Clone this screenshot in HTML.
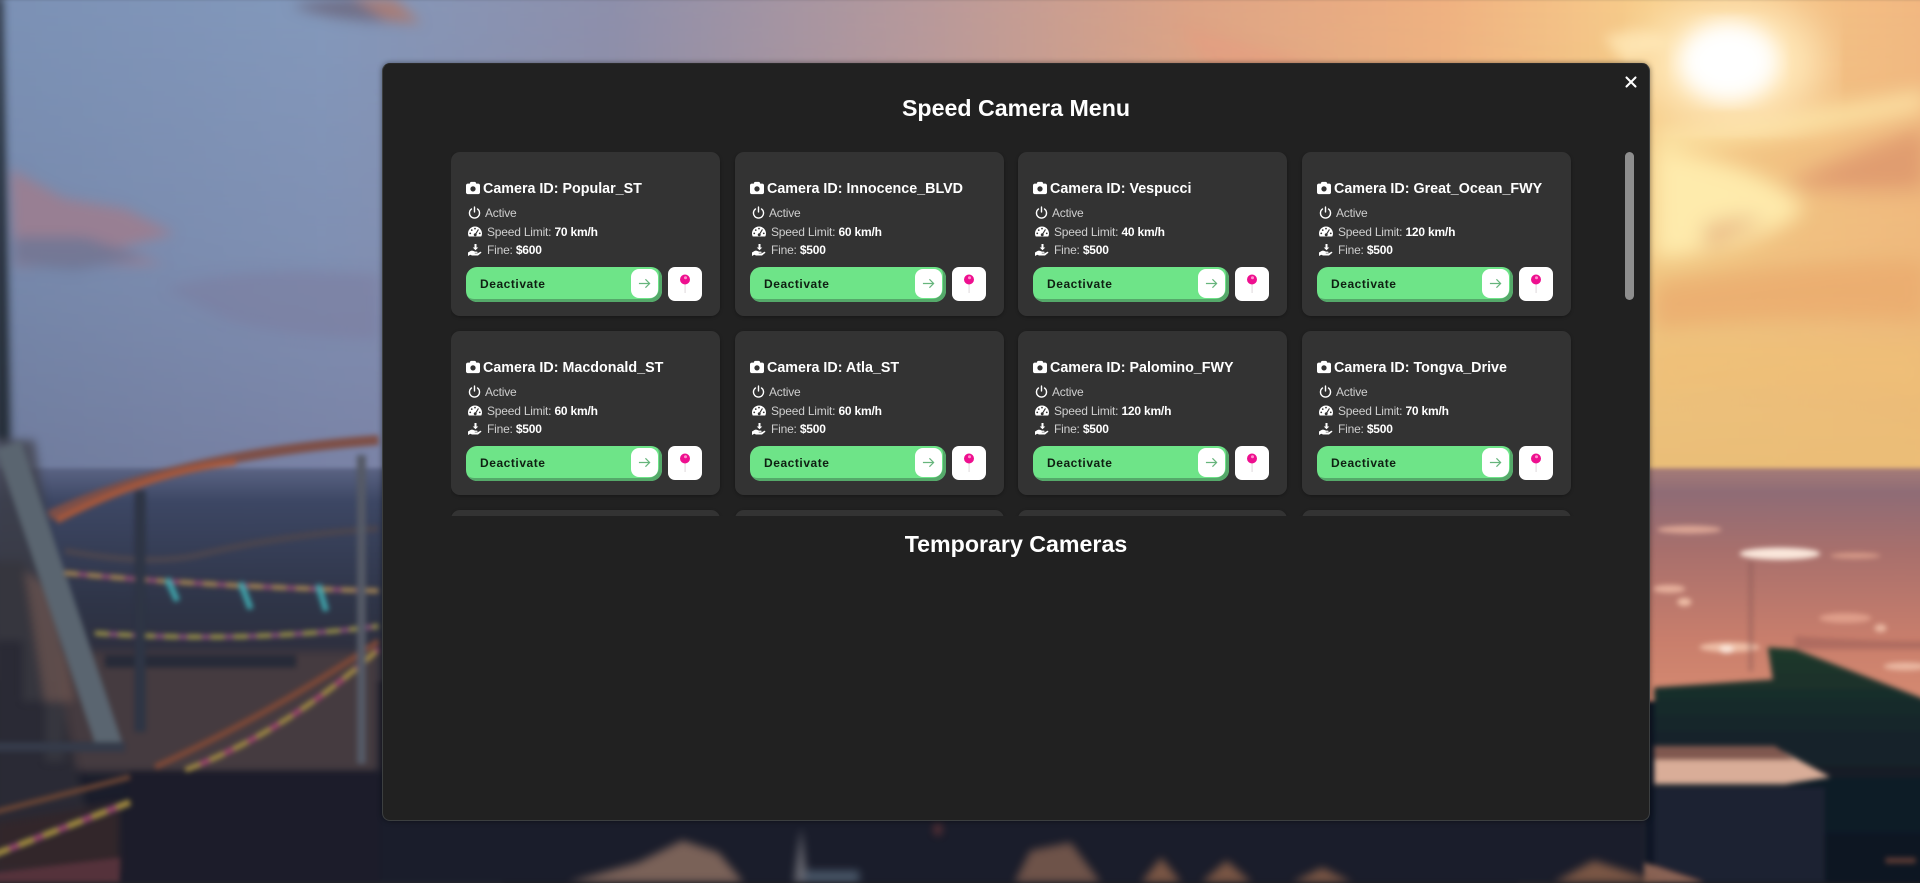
<!DOCTYPE html>
<html><head><meta charset="utf-8"><title>Speed Camera Menu</title>
<style>
*{box-sizing:border-box;margin:0;padding:0}
html,body{width:1920px;height:880px;overflow:hidden;background:#222;font-family:"Liberation Sans",sans-serif}
#bg{position:absolute;left:0;top:0;width:1920px;height:880px;filter:blur(2px);transform:scale(1.006)}
.modal{position:absolute;left:382px;top:63px;width:1268px;height:758px;background:#212121;border:1px solid #3c3f40;border-top-color:#2a2a2a;border-radius:8px;box-shadow:0 0 6px rgba(0,0,0,.45)}
h1,h2{position:absolute;left:0;width:1266px;text-align:center;color:#fff;font-weight:700;white-space:nowrap;font-size:23.2px;line-height:28px}
h1{top:30px}
h2{top:466px}
.x{position:absolute;left:1242px;top:12px;width:12px;height:12px}
.list{position:absolute;left:68px;top:88px;width:1131px;height:364px;overflow:hidden}
.card{position:absolute;width:269px;height:164px;background:#333;border-radius:9px;box-shadow:0 1px 3px rgba(0,0,0,.3);color:#fff}
.t{position:absolute;left:32px;top:28px;font-size:14.3px;line-height:18px;font-weight:700;white-space:nowrap}
.cam{position:absolute;left:15px;top:29px;width:14px;height:14px;fill:#fff}
.r{position:absolute;font-size:12px;line-height:14px;color:#cfcfcf;white-space:nowrap;letter-spacing:-.2px}
.r b{color:#fff;font-weight:700}
.a{left:34px;top:54px}.s{left:36px;top:73px}.f{left:36px;top:91px}
.i{position:absolute;left:17px;width:13px;height:13px;fill:#fff}
.ip{top:54px}.ig{top:73px;left:17px;width:14px;height:13px}.ih{top:91px;left:17px;width:14px;height:14px}
.btn{position:absolute;left:15px;top:115px;width:196px;height:35px;border-radius:11px;background:#6ee488;box-shadow:inset -3px -3px 0 #55a96a}
.btn span{position:absolute;left:14px;top:9.500px;font-size:12px;line-height:14px;font-weight:700;color:#0f1f12;letter-spacing:.55px}
.arr{position:absolute;left:165px;top:2px;width:27px;height:29px;border-radius:8px;background:#fff}
.arr svg{position:absolute;left:7px;top:8px;width:13px;height:13px}
.pin{position:absolute;left:217px;top:115px;width:34px;height:34px;border-radius:7px;background:#fff}
.pin svg{position:absolute;left:10px;top:7px;width:14px;height:20px}
.bar{position:absolute;left:1242px;top:88px;width:9px;height:148px;border-radius:5px;background:#8e8e8e}
</style></head><body>
<svg id="bg" viewBox="0 0 1920 880" xmlns="http://www.w3.org/2000/svg">
<defs>
<linearGradient id="sky" x1="0" x2="1" y1="0" y2="0"><stop offset="0" stop-color="#7c92b6"/><stop offset=".17" stop-color="#8499bc"/><stop offset=".32" stop-color="#8e90ac"/><stop offset=".48" stop-color="#b89a9c"/><stop offset=".62" stop-color="#dea486"/><stop offset=".75" stop-color="#f0b282"/><stop offset=".86" stop-color="#f8cf8c"/><stop offset="1" stop-color="#f2b882"/></linearGradient>
<linearGradient id="low" x1="0" x2="1" y1="0" y2="0"><stop offset="0" stop-color="#6f7b9c"/><stop offset=".2" stop-color="#7b83a6"/><stop offset=".45" stop-color="#b08d90"/><stop offset=".8" stop-color="#e8bd78"/><stop offset="1" stop-color="#ebbd76"/></linearGradient>
<linearGradient id="fade" x1="0" x2="0" y1="0" y2="1"><stop offset="0" stop-color="#fff" stop-opacity="0"/><stop offset=".5" stop-color="#fff" stop-opacity=".35"/><stop offset="1" stop-color="#fff"/></linearGradient>
<linearGradient id="seaL" x1="0" x2="0" y1="0" y2="1"><stop offset="0" stop-color="#5b6484"/><stop offset=".15" stop-color="#3d4764"/><stop offset=".6" stop-color="#2f3548"/><stop offset="1" stop-color="#2d2c38"/></linearGradient>
<linearGradient id="seaR" x1="0" x2="0" y1="0" y2="1"><stop offset="0" stop-color="#a67c78"/><stop offset=".1" stop-color="#8f6c76"/><stop offset=".35" stop-color="#a9706c"/><stop offset=".7" stop-color="#c87e6c"/><stop offset="1" stop-color="#d88c72"/></linearGradient>
<linearGradient id="hill" x1="0" x2="0" y1="0" y2="1"><stop offset="0" stop-color="#1f3a2a"/><stop offset=".4" stop-color="#13222a"/><stop offset="1" stop-color="#0e1522"/></linearGradient>
<filter id="b4"><feGaussianBlur stdDeviation="4"/></filter>
<filter id="b6"><feGaussianBlur stdDeviation="6"/></filter>
<filter id="b2"><feGaussianBlur stdDeviation="1.5"/></filter>
<filter id="b10"><feGaussianBlur stdDeviation="10"/></filter>
<filter id="b25"><feGaussianBlur stdDeviation="22"/></filter>
<mask id="lm"><rect width="1920" height="480" fill="url(#fade)"/></mask>
</defs>
<rect width="1920" height="880" fill="url(#sky)"/>
<rect width="1920" height="480" fill="url(#low)" mask="url(#lm)"/>
<g filter="url(#b6)">
<path d="M295 8Q340-2 385 2L425 26 380 24Q330 22 295 8Z" fill="#6f6f88"/><path d="M355 0L398 2 425 26 390 22Z" fill="#a87e78"/>
<path d="M15 170L70 200 130 210 180 235 120 250 170 265 20 268Z" fill="#a07c8c" opacity=".8"/><path d="M20 238L90 238 150 258 80 272 20 265Z" fill="#6c7596" opacity=".8"/>
<path d="M170 290Q240 265 382 275V340Q300 340 230 320Z" fill="#7d7a9c" opacity=".45"/>
<path d="M1180 30Q1230 40 1330 70L1210 75Z" fill="#e8987c" opacity=".4"/>
<path d="M1600 40Q1640 25 1670 45L1620 65Z" fill="#ffe9b8" opacity=".8"/>
</g>
<g filter="url(#b10)">
<path d="M1650 130Q1800 115 1920 92V112Q1780 145 1650 150Z" fill="#fde6a8" opacity=".85"/>
<path d="M1780 185Q1860 150 1920 130V190Q1840 195 1780 185Z" fill="#e09c70"/>
<path d="M1650 150Q1760 165 1800 210 1760 250 1650 260Z" fill="#ffeeb0" opacity=".9"/>
<path d="M1700 228Q1740 215 1760 222L1700 250Z" fill="#e2a878" opacity=".8"/>
<path d="M1650 285Q1800 262 1920 262V320Q1780 315 1650 330Z" fill="#eaaa6e" opacity=".75"/>
<path d="M1650 345H1920V400Q1780 370 1650 395Z" fill="#f0bf76" opacity=".7"/>
</g>
<ellipse cx="1728" cy="65" rx="90" ry="62" fill="#ffe9bb" filter="url(#b25)"/>
<ellipse cx="1724" cy="64" rx="50" ry="40" fill="#fff" filter="url(#b10)"/>
<rect y="468" width="1000" height="222" fill="url(#seaL)"/>
<rect x="1000" y="468" width="920" height="240" fill="url(#seaR)"/>
<g filter="url(#b2)">
<ellipse cx="1685" cy="529" rx="32" ry="4" fill="#dca594"/><ellipse cx="1775" cy="553" rx="40" ry="6" fill="#fbe8dc"/><ellipse cx="1850" cy="555" rx="25" ry="3" fill="#d69a88"/>
<ellipse cx="1665" cy="588" rx="16" ry="4" fill="#e6b09c"/><ellipse cx="1680" cy="601" rx="7" ry="4" fill="#f0c0a8"/><ellipse cx="1725" cy="646" rx="30" ry="5" fill="#eebea6"/>
<ellipse cx="1722" cy="648" rx="7" ry="4" fill="#fbe6da"/><ellipse cx="1840" cy="617" rx="26" ry="5" fill="#df9e8a"/><ellipse cx="1875" cy="627" rx="6" ry="4" fill="#eab8a2"/>
<rect x="1744" y="560" width="4" height="110" fill="#8a5a58" opacity=".55"/><path d="M1790 635Q1860 640 1920 640V648H1790Z" fill="#a4645c" opacity=".7"/>
<ellipse cx="1900" cy="665" rx="22" ry="4" fill="#eab8a2"/>
</g>
<rect x="1640" y="700" width="280" height="180" fill="#101726"/>
<rect y="680" width="1640" height="200" fill="#1a1d2b"/>
<path d="M60 650H382V770H60Z" fill="#443a40" filter="url(#b4)"/>
<path d="M135 770H382V880H125Z" fill="#1b1d2a" filter="url(#b2)"/>
<path d="M0 560H30L110 880H0Z" fill="#2c2b34" filter="url(#b4)"/>
<path d="M0 820L125 800V870H0Z" fill="#30262c" filter="url(#b4)"/>
<path d="M0 870L125 855V880H0Z" fill="#54323a" filter="url(#b2)"/>
<path d="M1650 686L1768 678 1763 646 1790 648 1920 698V880H1650Z" fill="url(#hill)" filter="url(#b2)"/>
<g filter="url(#b2)">
<path d="M1650 745H1770L1825 775 1780 782H1650Z" fill="#d9ad98"/><path d="M1650 744H1770L1790 758H1650Z" fill="#80584f"/>
<rect x="1650" y="785" width="170" height="95" fill="#1f2230"/><path d="M1640 860L1700 880H1640Z" fill="#8a6355"/>
<path d="M1880 855h30v6h-30z" fill="#5c3b34"/>
</g>
<g filter="url(#b4)">
<path d="M0 0H8L16 440 0 440Z" fill="#232a36"/>
<path d="M0 440V640H28V700H50V760H70V640L40 440Z" fill="#3a3a42" opacity=".7"/>
<path d="M30 570L60 590 80 700 50 700Z" fill="#6e5650" opacity=".7"/>
</g>
<g filter="url(#b2)" fill="none">
<path d="M14 445L115 745" stroke="#5a6570" stroke-width="26"/>
<path d="M55 515Q180 455 382 440" stroke="#7e5046" stroke-width="10"/>
<path d="M62 520Q160 470 240 462" stroke="#a8593a" stroke-width="6"/>
<path d="M70 550Q150 565 200 555Q280 535 382 528" stroke="#4a4550" stroke-width="7"/>
<path d="M70 572Q200 585 382 590" stroke="#2e3040" stroke-width="8"/>
<path d="M70 572Q200 585 382 590" stroke="#a6885c" stroke-width="4" stroke-dasharray="14 9"/>
<path d="M70 572Q200 585 382 590" stroke="#8d4f78" stroke-width="4" stroke-dasharray="9 14" stroke-dashoffset="9"/>
<path d="M100 632Q250 642 382 625" stroke="#2a2e3e" stroke-width="8"/>
<path d="M100 632Q250 642 382 625" stroke="#98904e" stroke-width="4" stroke-dasharray="14 9"/>
<path d="M100 632Q250 642 382 625" stroke="#86517a" stroke-width="4" stroke-dasharray="9 14" stroke-dashoffset="9"/>
<path d="M110 660H300" stroke="#262a38" stroke-width="12"/>
<path d="M160 765Q280 710 382 640" stroke="#7e4838" stroke-width="6"/>
<path d="M190 768Q290 730 382 648" stroke="#a68e44" stroke-width="5" stroke-dasharray="16 10"/>
<path d="M190 768Q290 730 382 648" stroke="#a5466e" stroke-width="5" stroke-dasharray="10 16" stroke-dashoffset="10"/>
<path d="M0 810L135 775" stroke="#6e4636" stroke-width="5"/>
<path d="M0 852L135 800" stroke="#2a2c34" stroke-width="10"/>
<path d="M0 852L135 800" stroke="#a89040" stroke-width="5" stroke-dasharray="16 10"/>
<path d="M0 852L135 800" stroke="#9c4a70" stroke-width="5" stroke-dasharray="10 16" stroke-dashoffset="10"/>
<path d="M145 490V730" stroke="#2e3444" stroke-width="11"/>
<path d="M365 455V762" stroke="#555a66" stroke-width="9"/>
<path d="M172 578L182 600M245 582L255 608M322 584L330 610" stroke="#3fa5ac" stroke-width="6"/>
<path d="M0 745H130" stroke="#343a48" stroke-width="10"/>
</g>
<g filter="url(#b4)">
<path d="M570 880L640 860 684 838 720 850 745 880Z" fill="#7a6258"/>
<path d="M795 880L802 825 808 880Z" fill="#6a6a72"/>
<path d="M805 868H860V880H805Z" fill="#4a5668"/>
<path d="M935 822h6v10h-6z" fill="#7a3a3a"/>
<path d="M1014 880L1030 848 1070 840 1100 880Z" fill="#6e5248"/>
<path d="M1140 880L1160 855 1180 880ZM1200 880L1225 858 1250 880ZM1290 880L1320 865 1350 880ZM1550 880L1590 858 1657 880Z" fill="#7a5644"/>
</g>
</svg>
<svg width="0" height="0" style="position:absolute"><defs>
<symbol id="camera" viewBox="0 0 512 512"><path d="M149.100 64.800L138.700 96H64C28.700 96 0 124.700 0 160V416c0 35.300 28.700 64 64 64H448c35.300 0 64-28.700 64-64V160c0-35.300-28.700-64-64-64H373.300L362.900 64.800C356.400 45.200 338.100 32 317.400 32H194.600c-20.700 0-39 13.200-45.500 32.800zM256 192a96 96 0 1 1 0 192 96 96 0 1 1 0-192z"/></symbol>
<symbol id="power" viewBox="0 0 24 24"><path d="M12 2v9M6.500 5.500a9.300 9.300 0 1 0 11 0" fill="none" stroke="#fff" stroke-width="2.600" stroke-linecap="round"/></symbol>
<symbol id="gauge" viewBox="0 0 28 24"><path fill-rule="evenodd" d="M14 2C6.300 2 0 8.300 0 16c0 2.300.6 4.300 1.600 6h24.800c1-1.700 1.600-3.700 1.600-6 0-7.700-6.300-14-14-14zM14 4.500a1.800 1.800 0 1 1 0 3.600 1.800 1.800 0 0 1 0-3.600zM7.500 7.500a1.800 1.800 0 1 1 0 3.600 1.800 1.800 0 0 1 0-3.600zM4.500 14a1.800 1.800 0 1 1 0 3.600 1.800 1.800 0 0 1 0-3.600zM23.500 14a1.800 1.800 0 1 1 0 3.600 1.800 1.800 0 0 1 0-3.600zM20 7.200l1.800 1.200-5 8.300a3 3 0 1 1-1.900-1.100z"/></symbol>
<symbol id="hand" viewBox="0 0 28 28"><path d="M13 2h4v7h3.500L15 14.500 9.500 9H13z"/><path d="M0 19l5-3c2-1.200 4-1 6 0l3 1.200h4c1.500 0 1.500 2.600 0 2.600h-4.500v.9H19l5.500-3c1.700-.8 3 1 1.600 2.300L20 25H8l-3.500-1.500L0 26z"/></symbol>
<symbol id="arrow" viewBox="0 0 14 14"><path d="M1 7h11.500M8 2.500L12.500 7 8 11.500" fill="none" stroke="#66b57c" stroke-width="1.300"/></symbol>
<symbol id="lolly" viewBox="0 0 14 20"><rect x="6.500" y="9" width="1.200" height="10" fill="#e3dfe2"/><circle cx="7" cy="5.500" r="5" fill="#ee0f8f"/><circle cx="7.500" cy="3.800" r="1.500" fill="#ff8fcb"/></symbol>
</defs></svg>
<div class="modal">
<h1>Speed Camera Menu</h1>
<svg class="x" viewBox="0 0 12 12"><path d="M1.500 1.500l9 9M10.500 1.500l-9 9" stroke="#fff" stroke-width="2.100" stroke-linecap="round"/></svg>
<div class="list">
<div class="card" style="left:0;top:0"><svg class="cam"><use href="#camera"/></svg><div class="t">Camera ID: Popular_ST</div><svg class="i ip"><use href="#power"/></svg><div class="r a">Active</div><svg class="i ig"><use href="#gauge"/></svg><div class="r s">Speed Limit: <b>70 km/h</b></div><svg class="i ih"><use href="#hand"/></svg><div class="r f">Fine: <b>$600</b></div><div class="btn"><span>Deactivate</span><div class="arr"><svg><use href="#arrow"/></svg></div></div><div class="pin"><svg><use href="#lolly"/></svg></div></div>
<div class="card" style="left:284px;top:0"><svg class="cam"><use href="#camera"/></svg><div class="t">Camera ID: Innocence_BLVD</div><svg class="i ip"><use href="#power"/></svg><div class="r a">Active</div><svg class="i ig"><use href="#gauge"/></svg><div class="r s">Speed Limit: <b>60 km/h</b></div><svg class="i ih"><use href="#hand"/></svg><div class="r f">Fine: <b>$500</b></div><div class="btn"><span>Deactivate</span><div class="arr"><svg><use href="#arrow"/></svg></div></div><div class="pin"><svg><use href="#lolly"/></svg></div></div>
<div class="card" style="left:567px;top:0"><svg class="cam"><use href="#camera"/></svg><div class="t">Camera ID: Vespucci</div><svg class="i ip"><use href="#power"/></svg><div class="r a">Active</div><svg class="i ig"><use href="#gauge"/></svg><div class="r s">Speed Limit: <b>40 km/h</b></div><svg class="i ih"><use href="#hand"/></svg><div class="r f">Fine: <b>$500</b></div><div class="btn"><span>Deactivate</span><div class="arr"><svg><use href="#arrow"/></svg></div></div><div class="pin"><svg><use href="#lolly"/></svg></div></div>
<div class="card" style="left:851px;top:0"><svg class="cam"><use href="#camera"/></svg><div class="t">Camera ID: Great_Ocean_FWY</div><svg class="i ip"><use href="#power"/></svg><div class="r a">Active</div><svg class="i ig"><use href="#gauge"/></svg><div class="r s">Speed Limit: <b>120 km/h</b></div><svg class="i ih"><use href="#hand"/></svg><div class="r f">Fine: <b>$500</b></div><div class="btn"><span>Deactivate</span><div class="arr"><svg><use href="#arrow"/></svg></div></div><div class="pin"><svg><use href="#lolly"/></svg></div></div>
<div class="card" style="left:0;top:179px"><svg class="cam"><use href="#camera"/></svg><div class="t">Camera ID: Macdonald_ST</div><svg class="i ip"><use href="#power"/></svg><div class="r a">Active</div><svg class="i ig"><use href="#gauge"/></svg><div class="r s">Speed Limit: <b>60 km/h</b></div><svg class="i ih"><use href="#hand"/></svg><div class="r f">Fine: <b>$500</b></div><div class="btn"><span>Deactivate</span><div class="arr"><svg><use href="#arrow"/></svg></div></div><div class="pin"><svg><use href="#lolly"/></svg></div></div>
<div class="card" style="left:284px;top:179px"><svg class="cam"><use href="#camera"/></svg><div class="t">Camera ID: Atla_ST</div><svg class="i ip"><use href="#power"/></svg><div class="r a">Active</div><svg class="i ig"><use href="#gauge"/></svg><div class="r s">Speed Limit: <b>60 km/h</b></div><svg class="i ih"><use href="#hand"/></svg><div class="r f">Fine: <b>$500</b></div><div class="btn"><span>Deactivate</span><div class="arr"><svg><use href="#arrow"/></svg></div></div><div class="pin"><svg><use href="#lolly"/></svg></div></div>
<div class="card" style="left:567px;top:179px"><svg class="cam"><use href="#camera"/></svg><div class="t">Camera ID: Palomino_FWY</div><svg class="i ip"><use href="#power"/></svg><div class="r a">Active</div><svg class="i ig"><use href="#gauge"/></svg><div class="r s">Speed Limit: <b>120 km/h</b></div><svg class="i ih"><use href="#hand"/></svg><div class="r f">Fine: <b>$500</b></div><div class="btn"><span>Deactivate</span><div class="arr"><svg><use href="#arrow"/></svg></div></div><div class="pin"><svg><use href="#lolly"/></svg></div></div>
<div class="card" style="left:851px;top:179px"><svg class="cam"><use href="#camera"/></svg><div class="t">Camera ID: Tongva_Drive</div><svg class="i ip"><use href="#power"/></svg><div class="r a">Active</div><svg class="i ig"><use href="#gauge"/></svg><div class="r s">Speed Limit: <b>70 km/h</b></div><svg class="i ih"><use href="#hand"/></svg><div class="r f">Fine: <b>$500</b></div><div class="btn"><span>Deactivate</span><div class="arr"><svg><use href="#arrow"/></svg></div></div><div class="pin"><svg><use href="#lolly"/></svg></div></div>
<div class="card" style="left:0;top:358px"></div>
<div class="card" style="left:284px;top:358px"></div>
<div class="card" style="left:567px;top:358px"></div>
<div class="card" style="left:851px;top:358px"></div>
</div>
<div class="bar"></div>
<h2>Temporary Cameras</h2>
</div>
</body></html>
